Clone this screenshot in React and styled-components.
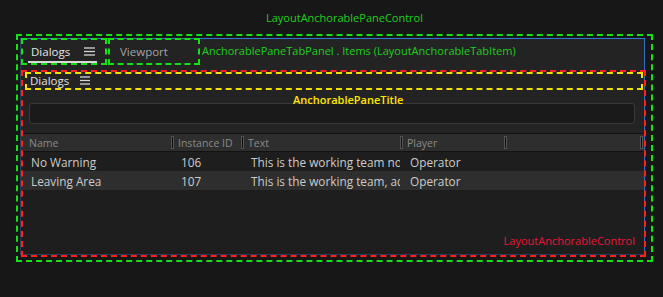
import React from 'react'
import styled, { createGlobalStyle } from 'styled-components';

const GREEN = '#16e016';
const GREEN_TEXT = '#1fcf1f';
const RED = '#ff1f1f';
const YELLOW = '#f2e200';

const GlobalStyle = createGlobalStyle`
  html, body {
    margin: 0;
    background: #171717;
  }
  body {
    font-family: "Open Sans", "Noto Sans", sans-serif;
  }
`;

const columns = [
  { key: 'name', title: 'Name', width: 150 },
  { key: 'id', title: 'Instance ID', width: 70 },
  { key: 'text', title: 'Text', width: 159 },
  { key: 'player', title: 'Player', width: 104 },
  { key: 'extra', title: '', width: 136 },
];

const rows = [
  { name: 'No Warning', id: '106', text: 'This is the working team no', player: 'Operator' },
  { name: 'Leaving Area', id: '107', text: 'This is the working team, ad', player: 'Operator' },
];

const MenuIcon = ({ size = 11 }) => (
  <svg width={size} height="9" viewBox={`0 0 ${size} 9`}>
    <g stroke="#d4d4d4" strokeWidth="1.3">
      <line x1="0" y1="1" x2={size} y2="1" />
      <line x1="0" y1="4.5" x2={size} y2="4.5" />
      <line x1="0" y1="8" x2={size} y2="8" />
    </g>
  </svg>
);

const App = () => {
  return (
    <Page>
      <GlobalStyle />
      <TopLabel>LayoutAnchorablePaneControl</TopLabel>
      <PaneControl>
        <Panel>
          <TabStrip>
            <Tab $width={86}>
              <TabInner $active>
                <span>Dialogs</span>
                <MenuIcon />
              </TabInner>
            </Tab>
            <Tab $width={92}>
              <TabInner>
                <span>Viewport</span>
              </TabInner>
            </Tab>
            <TabNote>AnchorablePaneTabPanel . Items (LayoutAnchorableTabItem)</TabNote>
          </TabStrip>

          <AnchorableControl>
            <TitleBar>
              <span>Dialogs</span>
              <MenuIcon size={10} />
              <TitleNote>AnchorablePaneTitle</TitleNote>
            </TitleBar>
            <SearchBox />
            <Table>
              <HeaderRow>
                {columns.map((col, index) => (
                  <HeaderCell key={col.key} $width={col.width}>
                    {index > 0 && <Grip />}
                    <HeaderText $first={index === 0}>{col.title}</HeaderText>
                  </HeaderCell>
                ))}
                <Grip />
              </HeaderRow>
              {rows.map((row, index) => (
                <Row key={row.id} $alt={index % 2 === 1}>
                  {columns.map((col) => (
                    <Cell key={col.key} $width={col.width}>{row[col.key]}</Cell>
                  ))}
                </Row>
              ))}
            </Table>
            <ControlNote>LayoutAnchorableControl</ControlNote>
          </AnchorableControl>
        </Panel>
      </PaneControl>
    </Page>
  )
}

export default App;

const Page = styled.div`
  width: 663px;
  height: 297px;
  overflow: hidden;
`;

const TopLabel = styled.div`
  height: 34px;
  display: flex;
  align-items: center;
  justify-content: center;
  padding-left: 26px;
  box-sizing: border-box;
  color: ${GREEN_TEXT};
  font-size: 11px;
`;

const PaneControl = styled.div`
  margin-left: 16px;
  width: 637px;
  height: 228px;
  box-sizing: border-box;
  border: 2px dashed ${GREEN};
  padding: 2px 6px 5px 2px;
  display: flex;
`;

const Panel = styled.div`
  flex: 1;
  display: flex;
  flex-direction: column;
  background: #232323;
  border-top: 1px solid #2f78d6;
  border-right: 1px solid #2f6fc4;
  border-left: 1px solid #2b3d52;
  border-bottom: 1px solid #2b3d52;
`;

const TabStrip = styled.div`
  height: 31px;
  display: flex;
  align-items: flex-start;
  gap: 1px;
`;

const Tab = styled.div`
  width: ${(p) => p.$width}px;
  height: 27px;
  margin-top: -1px;
  box-sizing: border-box;
  border: 2px dashed ${GREEN};
  padding-left: 5px;
  display: flex;
`;

const TabInner = styled.div`
  display: flex;
  align-items: center;
  gap: 14px;
  padding: 2px 2px 0 ${(p) => (p.$active ? 3 : 5)}px;
  border-bottom: 2px solid ${(p) => (p.$active ? '#d8d8d8' : 'transparent')};
  color: ${(p) => (p.$active ? '#e6e6e6' : '#a3a3a3')};
  font-size: 11.5px;
`;

const TabNote = styled.div`
  height: 26px;
  line-height: 26px;
  margin-left: 1px;
  margin-top: -1px;
  color: ${GREEN_TEXT};
  font-size: 11px;
  white-space: nowrap;
`;

const AnchorableControl = styled.div`
  flex: 1;
  position: relative;
  display: flex;
  flex-direction: column;

  &::after {
    content: '';
    position: absolute;
    top: 0;
    left: 0;
    right: -2px;
    bottom: -3px;
    border: 2px dashed ${RED};
    pointer-events: none;
  }
`;

const TitleBar = styled.div`
  position: relative;
  height: 18px;
  margin: 2px 1px 0 4px;
  box-sizing: border-box;
  border: 2px dashed ${YELLOW};
  padding: 0 0 2px 3px;
  display: flex;
  align-items: center;
  gap: 11px;
  color: #e2e2e2;
  font-size: 11.5px;
`;

const TitleNote = styled.div`
  position: absolute;
  top: 19px;
  left: 266px;
  line-height: 14px;
  color: #ffe600;
  font-size: 11px;
  font-weight: 600;
  white-space: nowrap;
`;

const SearchBox = styled.div`
  height: 21px;
  margin: 13px 9px 0 8px;
  box-sizing: border-box;
  border: 1px solid #393939;
  border-radius: 3px;
  background: #1a1a1a;
`;

const Table = styled.div`
  flex: 1;
  margin-top: 9px;
  background: #1e1e1e;
`;

const HeaderRow = styled.div`
  height: 19px;
  box-sizing: border-box;
  display: flex;
  align-items: center;
  background: #2e2e2e;
  border-top: 1px solid #121212;
  border-bottom: 1px solid #121212;
`;

const HeaderCell = styled.div`
  width: ${(p) => p.$width}px;
  flex-shrink: 0;
  display: flex;
  align-items: center;
`;

const HeaderText = styled.span`
  padding-left: ${(p) => (p.$first ? 8 : 4)}px;
  color: #8a8a8a;
  font-size: 10.5px;
  white-space: nowrap;
`;

const Grip = styled.div`
  width: 3px;
  height: 13px;
  box-sizing: border-box;
  border: 1px solid #555;
  background: #0e0e0e;
  flex-shrink: 0;
`;

const Row = styled.div`
  height: 19px;
  display: flex;
  align-items: center;
  background: ${(p) => (p.$alt ? '#2e2e2e' : 'transparent')};
`;

const Cell = styled.div`
  width: ${(p) => p.$width}px;
  flex-shrink: 0;
  box-sizing: border-box;
  padding-left: 10px;
  overflow: hidden;
  white-space: nowrap;
  color: #cccccc;
  font-size: 11.8px;
`;

const ControlNote = styled.div`
  position: absolute;
  right: 9px;
  bottom: 6px;
  line-height: 14px;
  color: #e8163a;
  font-size: 11px;
`;
